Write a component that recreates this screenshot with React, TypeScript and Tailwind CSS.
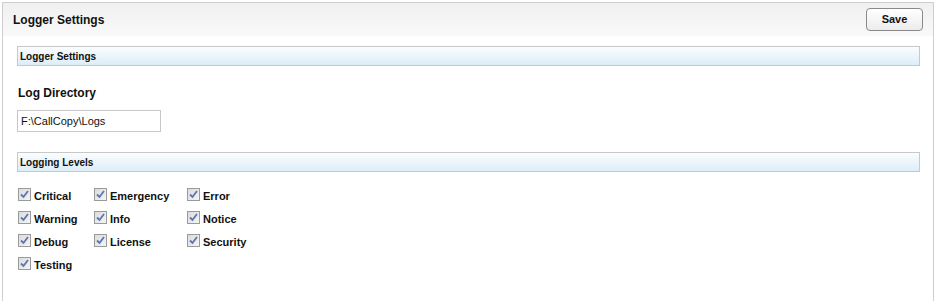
import React from 'react';

const levels = [
  ['Critical', 'Emergency', 'Error'],
  ['Warning', 'Info', 'Notice'],
  ['Debug', 'License', 'Security'],
  ['Testing'],
];

const colWidths = ['w-[76px]', 'w-[93px]', 'w-[80px]'];

const Check = ({ label, width }: { label: string; width: string }) => (
  <label className={`flex items-start gap-[3px] ${width}`}>
    <span className="mt-px flex h-[13px] w-[13px] shrink-0 items-center justify-center border border-[#9a9a9a] bg-gradient-to-br from-[#dcdcdc] to-[#f4f4f4]">
      <svg width="9" height="9" viewBox="0 0 9 9">
        <path d="M1 4.5 L3.5 7 L8 1" fill="none" stroke="#5a76b0" strokeWidth="1.8" />
      </svg>
    </span>
    <span className="pt-[3px] text-[11px] font-bold leading-[13px] text-[#111]">{label}</span>
  </label>
);

const SectionBar = ({ title }: { title: string }) => (
  <div className="flex h-5 items-center border border-[#c8c8c8] bg-gradient-to-b from-[#fbfdff] to-[#dcedf7] px-[2px] text-[10px] font-bold text-[#111]">
    {title}
  </div>
);

export default function App() {
  return (
    <div className="h-[301px] w-[937px] bg-white pl-[2px] pt-[2px] font-['Liberation_Sans',Arial,sans-serif]">
      <div className="h-full w-[932px] border-x border-t border-[#cfcfcf]">
        <div className="flex h-[33px] items-center justify-between bg-gradient-to-b from-[#f0f0f0] to-[#f9f9f9] pl-[10px] pr-[10px]">
          <h1 className="text-[12px] font-bold text-[#111]">Logger Settings</h1>
          <button className="h-[23px] w-[57px] rounded-[4px] border border-[#8a8a8a] bg-gradient-to-b from-white to-[#ececec] text-[11px] font-bold text-[#111]">
            Save
          </button>
        </div>
        <div className="pl-[14px] pr-[13px] pt-[10px]">
          <SectionBar title="Logger Settings" />
          <div className="mt-[20px] pl-px text-[12px] font-bold leading-[14px] text-[#111]">Log Directory</div>
          <input
            className="mt-[10px] h-[22px] w-[144px] border border-[#c8c8c8] px-[3px] text-[11px] text-[#111] outline-none"
            defaultValue="F:\CallCopy\Logs"
          />
          <div className="mt-[20px]">
            <SectionBar title="Logging Levels" />
          </div>
          <div className="mt-[15px] flex flex-col gap-[6px] pl-px">
            {levels.map((row, i) => (
              <div key={i} className="flex h-[17px]">
                {row.map((l, j) => (
                  <Check key={l} label={l} width={colWidths[j]} />
                ))}
              </div>
            ))}
          </div>
        </div>
      </div>
    </div>
  );
}
